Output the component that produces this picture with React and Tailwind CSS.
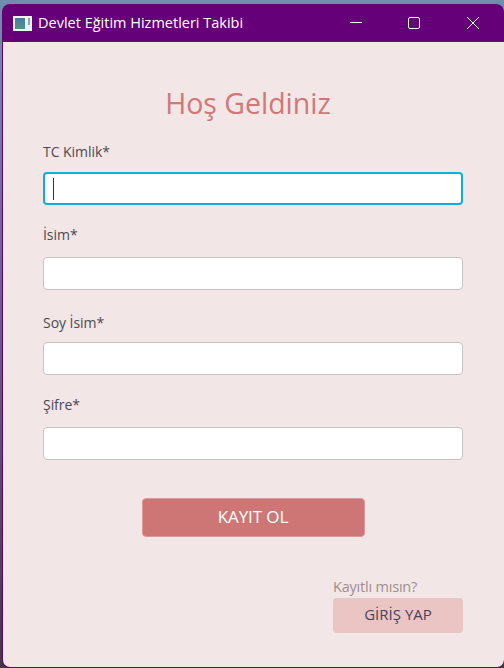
const fontStack = { fontFamily: '"Open Sans", "Noto Sans", sans-serif' };

function Field({ label, focused, top, gap }) {
  return (
    <div className={top}>
      <label className="block h-[20px] text-[14px] leading-[20px] text-[#4a4a55] tracking-[-0.05px]">{label}</label>
      <div
        className={
          gap +
          (focused
            ? " h-[33px] rounded-[4px] bg-white border-2 border-[#10aee0] pl-[8px] flex items-center"
            : " h-[33px] rounded-[4px] bg-white border border-[#c6c2c2]")
        }
      >
        {focused && <span className="w-px h-[22px] bg-[#333]"></span>}
      </div>
    </div>
  );
}

export default function App() {
  return (
    <div
      className="w-[504px] h-[668px] overflow-hidden pt-[4px] pl-[2px] bg-gradient-to-b from-[#6f8fae] via-[#6a5a86] to-[#3c3c3c]"
      style={fontStack}
    >
      <div className="w-[502px] h-[664px] flex flex-col rounded-t-[8px] rounded-b-[8px] bg-[#660078] pb-px pl-px overflow-hidden">
        {/* title bar */}
        <div className="h-[38px] shrink-0 flex items-center text-white -ml-px">
          <svg className="ml-[11px] mr-[6px]" width="19" height="15" viewBox="0 0 19 15">
            <defs>
              <linearGradient id="pane" x1="0" y1="0" x2="0" y2="1">
                <stop offset="0" stopColor="#4a78a8" />
                <stop offset="1" stopColor="#4f9a80" />
              </linearGradient>
            </defs>
            <rect width="19" height="15" fill="#eef2f3" />
            <rect x="2" y="2" width="10" height="11" fill="url(#pane)" />
            <rect x="15" y="2" width="2" height="7" fill="#7fb0a8" />
          </svg>
          <span className="text-[14.5px] leading-none">Devlet Eğitim Hizmetleri Takibi</span>
          <div className="ml-auto flex items-center">
            <svg className="mr-[46px]" width="12" height="2" viewBox="0 0 12 2">
              <rect width="12" height="1" y="0" fill="#fff" />
            </svg>
            <svg className="mr-[46px]" width="12" height="12" viewBox="0 0 12 12" fill="none">
              <rect x="0.5" y="0.5" width="11" height="11" rx="1.5" stroke="#fff" />
            </svg>
            <svg className="mr-[24px]" width="14" height="14" viewBox="0 0 14 14" fill="none">
              <path d="M1 1 L13 13 M13 1 L1 13" stroke="#fff" />
            </svg>
          </div>
        </div>
        {/* body */}
        <div className="flex-1 bg-[#f3e6e6] rounded-b-[7px] pt-[41px] pl-[40px] pr-[41px]">
          <h1 className="text-center text-[28.5px] leading-[40px] text-[#d07878] mb-[19px] pr-[10px]">Hoş Geldiniz</h1>
          <Field label="TC Kimlik*" focused gap="mt-[10px]" />
          <Field label="İsim*" top="mt-[20px]" gap="mt-[12px]" />
          <Field label="Soy İsim*" top="mt-[23px]" gap="mt-[9px]" />
          <Field label="Şifre*" top="mt-[20px]" gap="mt-[12px]" />
          <div className="flex justify-center mt-[38px]">
            <button className="w-[223px] h-[39px] rounded-[4px] bg-[#ce7676] border border-[#dc9a9a] text-white text-[17px] tracking-[-0.1px] pb-[2px]">
              KAYIT OL
            </button>
          </div>
          <div className="mt-[41px] w-[130px] ml-auto">
            <p className="text-[14.5px] leading-[18px] text-[#a08f8f] tracking-[-0.2px]">Kayıtlı mısın?</p>
            <button className="mt-[2px] w-[130px] h-[35px] rounded-[4px] bg-[#ebc4c4] text-[#3f4560] text-[15px] pb-[2px]">
              GİRİŞ YAP
            </button>
          </div>
        </div>
      </div>
    </div>
  );
}
